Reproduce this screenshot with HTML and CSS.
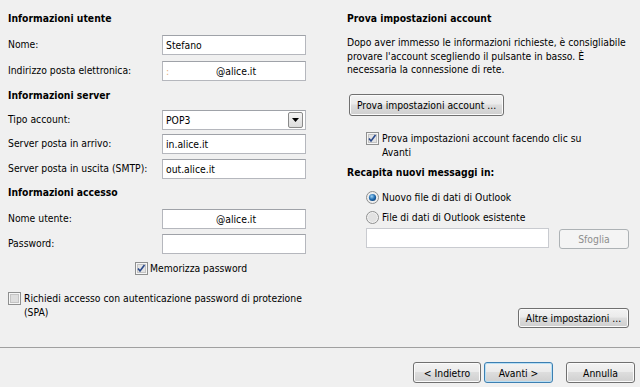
FILE: index.html
```html
<!DOCTYPE html>
<html lang="it">
<head>
<meta charset="utf-8">
<title>Impostazioni account</title>
<link rel="stylesheet" href="styles.css">
</head>
<body>
<div class="dialog">
  <div class="content">
    <div class="col-left">
      <div class="heading">Informazioni utente</div>
      <div class="field mt10"><span class="label">Nome:</span><span class="input">Stefano</span></div>
      <div class="field mt6"><span class="label">Indirizzo posta elettronica:</span><span class="input"><span class="mark">:</span><span class="domain">@alice.it</span></span></div>

      <div class="heading mt7">Informazioni server</div>
      <div class="field mt8"><span class="label">Tipo account:</span><span class="input select">POP3<span class="dd"><svg width="7" height="4" viewBox="0 0 7 4"><path d="M0 0h7L3.5 4z" fill="#000"/></svg></span></span></div>
      <div class="field mt4"><span class="label">Server posta in arrivo:</span><span class="input">in.alice.it</span></div>
      <div class="field mt5"><span class="label">Server posta in uscita (SMTP):</span><span class="input">out.alice.it</span></div>

      <div class="heading mt6">Informazioni accesso</div>
      <div class="field mt10"><span class="label">Nome utente:</span><span class="input"><span class="domain">@alice.it</span></span></div>
      <div class="field mt5"><span class="label">Password:</span><span class="input"></span></div>

      <div class="check-row remember mt7">
        <svg class="cb" width="13" height="13" viewBox="0 0 13 13"><rect x="0.5" y="0.5" width="12" height="12" fill="#f6f6f6" stroke="#8e8f8f"/><rect x="2.5" y="2.5" width="8" height="8" fill="#e3e3e3" stroke="#c4c4c4"/><path d="M3 6.6l2 2.4 4.5-6" fill="none" stroke="#2b4a8b" stroke-width="1.6"/></svg>
        <span>Memorizza password</span>
      </div>
      <div class="check-row spa">
        <svg class="cb" width="13" height="13" viewBox="0 0 13 13"><rect x="0.5" y="0.5" width="12" height="12" fill="#f6f6f6" stroke="#8e8f8f"/><rect x="2.5" y="2.5" width="8" height="8" fill="#dedede" stroke="#c4c4c4"/></svg>
        <span>Richiedi accesso con autenticazione password di protezione<br>(SPA)</span>
      </div>
    </div>

    <div class="col-right">
      <div class="heading">Prova impostazioni account</div>
      <p class="para">Dopo aver immesso le informazioni richieste, è consigliabile<br>provare l'account scegliendo il pulsante in basso. È<br>necessaria la connessione di rete.</p>
      <button class="btn test-btn">Prova impostazioni account ...</button>
      <div class="check-row test-check">
        <svg class="cb" width="13" height="13" viewBox="0 0 13 13"><rect x="0.5" y="0.5" width="12" height="12" fill="#f6f6f6" stroke="#8e8f8f"/><rect x="2.5" y="2.5" width="8" height="8" fill="#e3e3e3" stroke="#c4c4c4"/><path d="M3 6.6l2 2.4 4.5-6" fill="none" stroke="#2b4a8b" stroke-width="1.6"/></svg>
        <span>Prova impostazioni account facendo clic su<br>Avanti</span>
      </div>
      <div class="heading deliver">Recapita nuovi messaggi in:</div>
      <div class="radio-row r1">
        <svg class="rb" width="13" height="13" viewBox="0 0 13 13"><defs><radialGradient id="dot" cx="0.4" cy="0.35" r="0.7"><stop offset="0" stop-color="#9fd3f5"/><stop offset="0.6" stop-color="#1f6bb0"/><stop offset="1" stop-color="#0d3f78"/></radialGradient></defs><circle cx="6.5" cy="6.5" r="6" fill="#eeeeee" stroke="#8e8f8f"/><circle cx="6.5" cy="6.5" r="3.6" fill="url(#dot)"/></svg>
        <span>Nuovo file di dati di Outlook</span>
      </div>
      <div class="radio-row r2">
        <svg class="rb" width="13" height="13" viewBox="0 0 13 13"><circle cx="6.5" cy="6.5" r="6" fill="#f2f2f2" stroke="#8e8f8f"/><circle cx="6.5" cy="6.5" r="4.5" fill="#e2e2e2"/></svg>
        <span>File di dati di Outlook esistente</span>
      </div>
      <div class="browse-row">
        <span class="input path"></span>
        <button class="btn disabled browse">Sfoglia</button>
      </div>
      <div class="more-row">
        <button class="btn more">Altre impostazioni ...</button>
      </div>
    </div>
  </div>

  <div class="footer">
    <button class="btn nav back">&lt; Indietro</button>
    <button class="btn nav next default">Avanti &gt;</button>
    <button class="btn nav cancel">Annulla</button>
  </div>
</div>
</body>
</html>
```

FILE: styles.css
```css
* { box-sizing: border-box; }

html, body {
  margin: 0;
  padding: 0;
  background: #f0f0f0;
}

body {
  width: 640px;
  height: 387px;
  overflow: hidden;
  font-family: "DejaVu Sans", "Liberation Sans", sans-serif;
  font-stretch: condensed;
  font-size: 10.3px;
  line-height: 14px;
  color: #000;
}

.dialog {
  display: flex;
  flex-direction: column;
  height: 387px;
}

.content {
  display: flex;
  height: 347px;
}

.col-left {
  flex: 0 0 347px;
  padding: 11px 0 0 8px;
}

.col-right {
  flex: 1;
  display: flex;
  flex-direction: column;
  align-items: flex-start;
  padding: 11px 11px 19px 0;
}

.heading {
  font-weight: bold;
  height: 14px;
  white-space: nowrap;
}

.mt4 { margin-top: 4px; }
.mt5 { margin-top: 5px; }
.mt6 { margin-top: 6px; }
.mt7 { margin-top: 7px; }
.mt8 { margin-top: 8px; }
.mt10 { margin-top: 10px; }

.field {
  display: grid;
  grid-template-columns: 154px 144px;
  align-items: start;
}

.field .label {
  padding-top: 2px;
  white-space: nowrap;
}

.input {
  display: flex;
  align-items: center;
  height: 20px;
  padding: 0 3px;
  background: #fff;
  border: 1px solid #b5b7bd;
  border-top-color: #9fa2a8;
  white-space: nowrap;
  color: #000;
}

.input .mark {
  color: #e6b07a;
  width: 50px;
}

.input .domain {
  margin-left: 50px;
}

.input .mark + .domain { margin-left: 0; }

.select {
  justify-content: space-between;
  padding-right: 2px;
}

.dd {
  display: flex;
  align-items: center;
  justify-content: center;
  width: 15px;
  height: 16px;
  border: 1px solid #8a8a8a;
  border-radius: 2px;
  background: linear-gradient(#f4f4f4, #dcdcdc);
}

.check-row, .radio-row {
  display: flex;
  align-items: flex-start;
  white-space: nowrap;
}

.cb, .rb {
  flex: 0 0 13px;
  margin-top: 1px;
  margin-right: 3px;
}

.remember {
  margin-left: 127px;
}

.remember .cb { margin-right: 2px; }

.spa {
  margin-top: 16px;
}

.para {
  margin: 11px 0 0 0;
  line-height: 13.5px;
  white-space: nowrap;
}

.btn {
  font: inherit;
  color: #000;
  height: 22px;
  padding: 0 6px;
  background: linear-gradient(#f3f3f3 0%, #ebebeb 45%, #dddddd 50%, #cfcfcf 100%);
  border: 1px solid #707070;
  border-radius: 3px;
  box-shadow: inset 0 0 0 1px #fbfbfb;
  white-space: nowrap;
}

.test-btn {
  margin: 17.5px 0 0 2px;
  width: 155px;
}

.test-check {
  margin: 15px 0 0 19px;
}

.deliver {
  margin-top: 6px;
}

.radio-row {
  margin-left: 19px;
}

.r1 { margin-top: 11px; }
.r2 { margin-top: 6px; }

.browse-row {
  display: flex;
  align-items: flex-start;
  margin: 4px 0 0 19px;
}

.path {
  width: 183px;
  border-color: #c9cbd0;
}

.browse {
  width: 70px;
  height: 20px;
  margin: 1px 0 0 10px;
}

.btn.disabled {
  color: #8d8d8d;
  background: #f4f4f4;
  border-color: #adb2b5;
  box-shadow: none;
}

.more-row {
  margin-top: auto;
  align-self: stretch;
  display: flex;
  justify-content: flex-end;
}

.more {
  width: 111px;
  height: 20px;
}

.footer {
  flex: 1;
  display: flex;
  justify-content: flex-end;
  align-items: flex-start;
  border-top: 1px solid #a0a0a0;
  padding: 14px 5px 0 0;
}

.nav {
  height: 21px;
  width: 69px;
}

.back { width: 68px; }
.next { margin-left: 3px; }
.cancel { margin-left: 13px; }

.default {
  border-color: #3c7fb1;
  box-shadow: inset 0 0 0 1px #b8dff5;
}
```
